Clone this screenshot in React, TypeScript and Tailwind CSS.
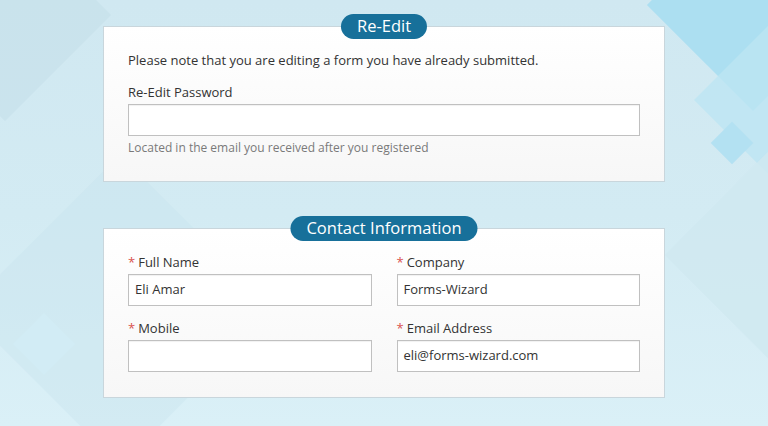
import React from "react";

const font = { fontFamily: '"Open Sans", "Noto Sans", sans-serif' };

function Badge({ children }: { children: React.ReactNode }) {
  return (
    <div className="absolute left-1/2 top-[-13px] -translate-x-1/2 whitespace-nowrap rounded-full bg-[#17709a] px-[16px] h-[25px] flex items-center text-[16.5px] leading-none text-white">
      {children}
    </div>
  );
}

function Field({ label, value, required = true }: { label: string; value?: string; required?: boolean }) {
  return (
    <div className="flex flex-col">
      <label className="text-[13px] leading-[20px] text-[#333] mb-[2px]">
        {required && <span className="text-[#d9534f] mr-[3px]">*</span>}
        {label}
      </label>
      <div className="h-[32px] border border-[#c0c0c0] bg-white px-[6px] flex items-center text-[13px] text-[#333] shadow-[inset_0_1px_1px_rgba(0,0,0,0.06)]">
        {value}
      </div>
    </div>
  );
}

export default function App() {
  return (
    <div
      className="relative h-[426px] w-full overflow-hidden bg-gradient-to-b from-[#d0e8f1] via-[#d3ebf3] to-[#daf0f7]"
      style={font}
    >
      {/* background diamonds */}
      <div className="absolute left-[-70px] top-[-60px] h-[150px] w-[150px] rotate-45 bg-[#c4dfe9] opacity-60" />
      <div className="absolute left-[10px] top-[200px] h-[220px] w-[220px] rotate-45 bg-[#c9e4ee] opacity-40" />
      <div className="absolute left-[22px] top-[322px] h-[44px] w-[44px] rotate-45 bg-[#d2ecf5] opacity-80" />
      <div className="absolute right-[-60px] top-[-70px] h-[150px] w-[150px] rotate-45 bg-[#acdff1]" />
      <div className="absolute right-[-95px] top-[30px] h-[140px] w-[140px] rotate-45 bg-[#bde5f3] opacity-80" />
      <div className="absolute right-[21px] top-[128px] h-[30px] w-[30px] rotate-45 bg-[#b3e1f2]" />
      <div className="absolute right-[-90px] top-[175px] h-[160px] w-[160px] rotate-45 bg-[#cfe8f0] opacity-80" />

      <div className="relative mx-auto flex w-[562px] flex-col gap-[46px] pt-[26px]">
        <section className="relative border border-[#c9d6dc] bg-gradient-to-b from-white to-[#f7f7f7] px-[24px] pt-[23px] pb-[25px]">
          <Badge>Re-Edit</Badge>
          <div className="flex flex-col gap-[12px]">
            <p className="text-[13px] leading-[20px] text-[#333]">
              Please note that you are editing a form you have already submitted.
            </p>
            <div className="flex flex-col gap-[4px]">
              <Field label="Re-Edit Password" required={false} />
              <p className="text-[12px] leading-[16px] text-[#7a7a7a]">
                Located in the email you received after you registered
              </p>
            </div>
          </div>
        </section>

        <section className="relative border border-[#c9d6dc] bg-gradient-to-b from-white to-[#f7f7f7] px-[24px] pt-[23px] pb-[25px]">
          <Badge>Contact Information</Badge>
          <div className="grid grid-cols-2 gap-x-[25px] gap-y-[12px]">
            <Field label="Full Name" value="Eli Amar" />
            <Field label="Company" value="Forms-Wizard" />
            <Field label="Mobile" />
            <Field label="Email Address" value="eli@forms-wizard.com" />
          </div>
        </section>
      </div>
    </div>
  );
}
